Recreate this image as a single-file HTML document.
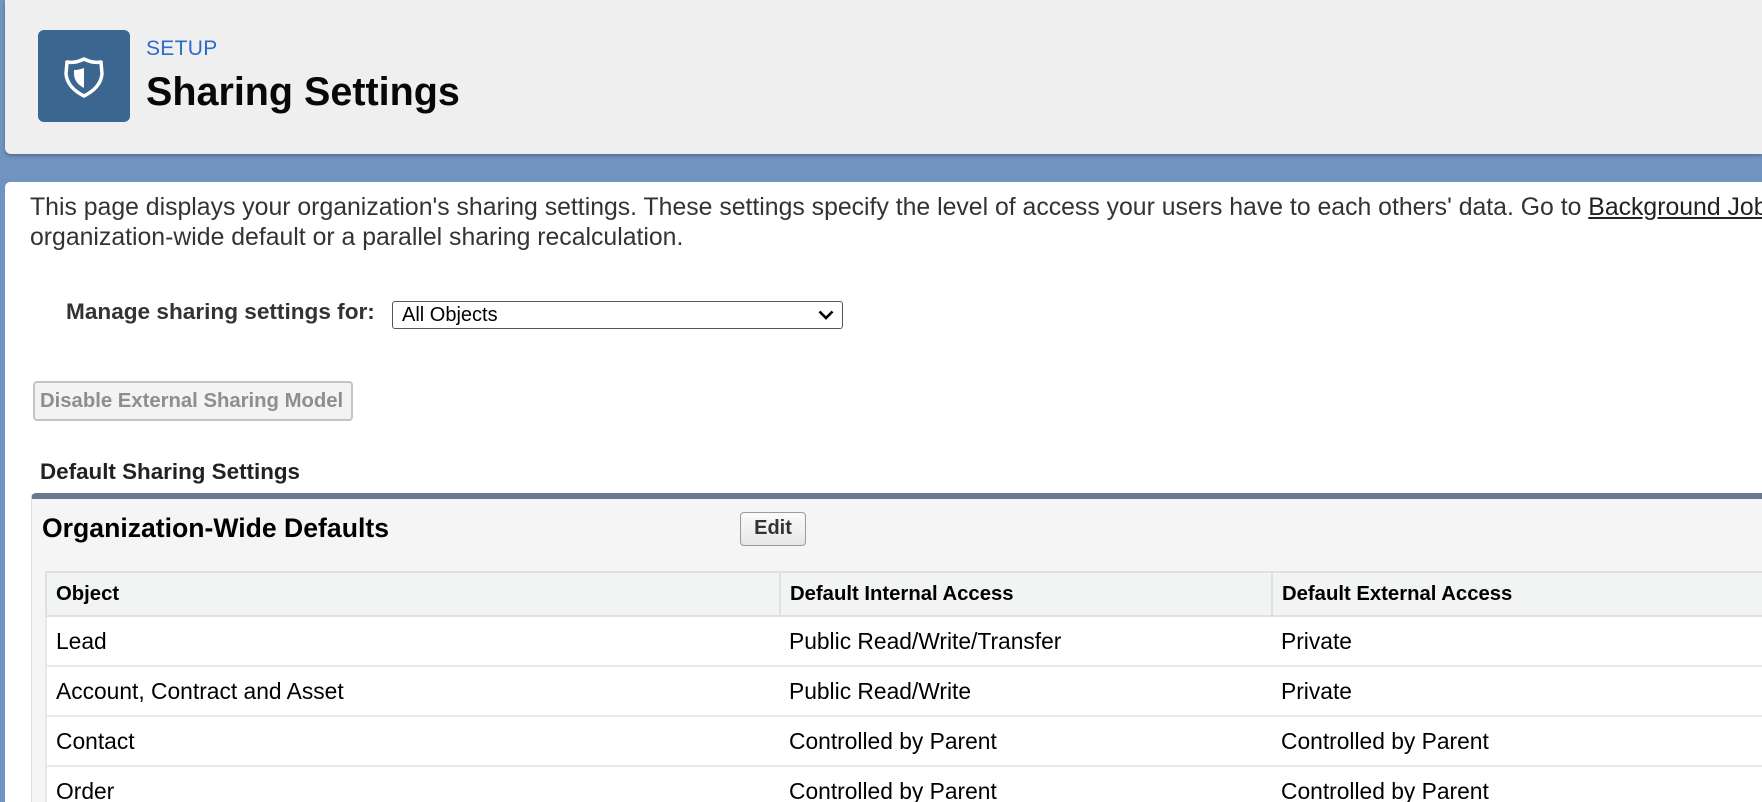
<!DOCTYPE html>
<html><head><meta charset="utf-8"><style>
*{margin:0;padding:0;box-sizing:border-box}
html,body{width:1762px;height:802px;overflow:hidden}
body{background:#7093c0;font-family:"Liberation Sans",Arial,sans-serif;position:relative;color:#111}
.hdr{position:absolute;left:5px;top:0;width:1757px;height:154px;background:#efefef;border-radius:0 0 0 6px;box-shadow:0 2px 3px rgba(0,0,0,.25)}
.icon{position:absolute;left:33px;top:30px;width:92px;height:92px;background:#3a6690;border-radius:6px}
.setup{position:absolute;left:141px;top:37px;font-size:21px;color:#2c6bcc;letter-spacing:.3px}
.title{position:absolute;left:141px;top:70px;font-size:39.5px;font-weight:bold;color:#080808}
.card{position:absolute;left:5px;top:182px;width:1757px;height:620px;background:#fff;border-radius:5px 0 0 0}
.p{position:absolute;left:30px;top:193px;width:1732px;overflow:hidden;font-size:24.8px;line-height:30px;color:#333;white-space:nowrap}
.p u{color:#222}
.lbl{position:absolute;left:66px;top:299px;font-size:22.6px;font-weight:bold;color:#333}
.sel{position:absolute;left:392px;top:301px;width:451px;height:28px;border:1px solid #555;border-radius:3px;font-size:20px;padding:2px 9px;color:#000;background:#fff}
.btn{position:absolute;left:33px;top:381px;width:320px;height:40px;border:2px solid #c4c4c4;border-radius:4px;background:#f3f3f3;color:#8e8e8e;font-weight:bold;font-size:20.3px;padding:7px 5px;white-space:nowrap}
.dss{position:absolute;left:40px;top:459px;font-size:22.4px;font-weight:bold;color:#222}
.panel{position:absolute;left:31px;top:493px;width:1731px;height:309px;background:#f5f5f5;border-top:6px solid #6b778e;border-left:1px solid #ddd;border-radius:5px 0 0 0}
.owd{position:absolute;left:42px;top:513px;font-size:26.6px;font-weight:bold;color:#000}
.edit{position:absolute;left:740px;top:512px;width:66px;height:34px;border:1px solid #9a9a9a;border-radius:4px;background:linear-gradient(#fbfbfb,#e6e6e6);font-weight:bold;font-size:20px;text-align:center;line-height:31px;color:#333}
.tw{position:absolute;left:45px;top:571px;width:1717px;height:231px;overflow:hidden}
table{width:1760px;border-collapse:collapse;background:#fff;font-size:22.8px}
th{background:#f2f3f3;text-align:left;font-size:20.3px;font-weight:bold;height:44px;padding:0 9px;border:1px solid #e0e0e0;border-width:2px 0 2px 2px;border-color:#e0e0e0;color:#000}
td{height:50px;padding:0 9px;border-bottom:2px solid #e8e8e8;color:#000;white-space:nowrap}
td:first-child{border-left:2px solid #e8e8e8}
</style></head><body>
<div class="hdr">
<div class="icon"><svg width="92" height="92" viewBox="0 0 92 92"><path d="M46 29 C52 32 58 33 63 32 L64 44 C63 54 56 61 46 66 C36 61 29 54 28 44 L29 32 C34 33 40 32 46 29 Z" fill="none" stroke="#fff" stroke-width="3.5" stroke-linejoin="round"/><path d="M46 38 L46 58 C40 55 36 50 36 44 L36 40 C40 40 43 39 46 38Z" fill="#fff"/></svg></div>
<div class="setup">SETUP</div>
<div class="title">Sharing Settings</div>
</div>
<div class="card"></div>
<div class="p">This page displays your organization's sharing settings. These settings specify the level of access your users have to each others' data. Go to <u>Background Jobs</u> to monitor the progress of an<br>organization-wide default or a parallel sharing recalculation.</div>
<div class="lbl">Manage sharing settings for:</div>
<div class="sel">All Objects<svg style="position:absolute;right:8px;top:8px" width="16" height="10" viewBox="0 0 16 10"><path d="M1.5 1.5 L8 8 L14.5 1.5" fill="none" stroke="#000" stroke-width="2.6"/></svg></div>
<div class="btn">Disable External Sharing Model</div>
<div class="dss">Default Sharing Settings</div>
<div class="panel"></div>
<div class="owd">Organization-Wide Defaults</div>
<div class="edit">Edit</div>
<div class="tw">
<table>
<tr><th style="width:734px">Object</th><th style="width:492px">Default Internal Access</th><th>Default External Access</th></tr>
<tr><td>Lead</td><td>Public Read/Write/Transfer</td><td>Private</td></tr>
<tr><td>Account, Contract and Asset</td><td>Public Read/Write</td><td>Private</td></tr>
<tr><td>Contact</td><td>Controlled by Parent</td><td>Controlled by Parent</td></tr>
<tr><td>Order</td><td>Controlled by Parent</td><td>Controlled by Parent</td></tr>
</table>
</div>
</body></html>
